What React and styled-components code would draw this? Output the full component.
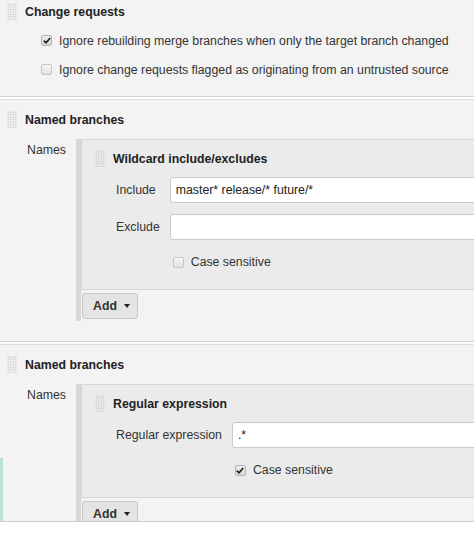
import React from "react";
import styled, { createGlobalStyle } from "styled-components";

const GlobalStyle = createGlobalStyle`
  html, body { margin: 0; padding: 0; background: #ffffff; }
  body {
    font-family: "Liberation Sans", Arial, Helvetica, sans-serif;
    font-size: 12.3px;
    color: #333;
  }
  * { box-sizing: border-box; }
`;

const Viewport = styled.div`
  position: relative;
  width: 474px;
  height: 522px;
  overflow: hidden;
  border-bottom: 1px solid #cbcbcb;
`;

const Scroller = styled.div`
  width: 540px;
  margin-top: -9px;
`;

const Section = styled.section`
  background: #f3f3f3;
  border-top: 1px solid #dedede;
  border-bottom: 1px solid #d3d3d3;
  padding: 11px 0 ${(p) => p.$pb ?? 20}px 7px;
  & + & { margin-top: 2px; }
`;

const Header = styled.div`
  display: flex;
  align-items: center;
  gap: 8px;
  height: 17px;
  font-weight: bold;
  font-size: 12.3px;
  color: #222;
`;

const Grip = styled.span`
  flex: none;
  width: 10px;
  height: 17px;
  background-image: radial-gradient(circle, #d0d0d0 0.75px, transparent 0.95px);
  background-size: 2.5px 2.5px;
  background-position: 0 0;
`;

const CheckList = styled.div`
  display: grid;
  grid-auto-rows: 29px;
  padding: 6px 0 0 34px;
`;

const CheckRow = styled.label`
  display: flex;
  align-items: center;
  gap: 7px;
  color: #333;
  white-space: nowrap;
`;

const Box = styled.span`
  flex: none;
  width: 11px;
  height: 11px;
  border: 1px solid ${(p) => (p.$checked ? "#b3b3b3" : "#c6c6c6")};
  border-radius: 2px;
  background: ${(p) =>
    p.$checked
      ? "linear-gradient(#eeeeee, #d9d9d9)"
      : "linear-gradient(#f6f6f6, #e2e2e2)"};
  display: flex;
  align-items: center;
  justify-content: center;
`;

const Checkbox = ({ checked }) => (
  <Box $checked={checked}>
    {checked && (
      <svg width="8" height="7" viewBox="0 0 8 7">
        <path d="M0.8 3.6 L3 5.8 L7.2 1" fill="none" stroke="#222" strokeWidth="1.7" />
      </svg>
    )}
  </Box>
);

const NamesRow = styled.div`
  display: grid;
  grid-template-columns: 69px 1fr;
  margin-top: 11px;
`;

const NamesLabel = styled.div`
  text-align: right;
  padding: 4px 10px 0 0;
  line-height: 15px;
  color: #333;
`;

const Chunk = styled.div`
  border-left: 5px solid #d7d7d7;
  padding-bottom: 2px;
`;

const Panel = styled.div`
  background: #ebebeb;
  border: 1px solid #d6d6d6;
  border-right: none;
  padding: 10px 0 16px 13px;
`;

const Fields = styled.div`
  display: grid;
  grid-template-columns: auto 1fr;
  column-gap: 10px;
  row-gap: 11px;
  margin: 10px 0 0 21px;
  align-items: center;
`;

const FieldLabel = styled.div`
  color: #333;
  white-space: nowrap;
`;

const Input = styled.div`
  height: 26px;
  background: #fff;
  border: 1px solid #cacaca;
  border-radius: 3px;
  padding: 0 5px;
  display: flex;
  align-items: center;
  color: #222;
`;

const OptionRow = styled.label`
  grid-column: 2;
  display: flex;
  align-items: center;
  gap: 7px;
  height: 22px;
  padding-left: 3px;
  color: #333;
`;

const AddButton = styled.button`
  display: inline-flex;
  align-items: center;
  gap: 7px;
  height: 26px;
  margin: 3px 0 0 1px;
  padding: 0 7px 0 10px;
  background: #e4e4e4;
  border: 1px solid #c8c8c8;
  border-radius: 3px;
  font-family: inherit;
  font-size: 12.3px;
  font-weight: bold;
  color: #333;
`;

const Caret = styled.span`
  width: 0;
  height: 0;
  border-top: 4.5px solid #222;
  border-left: 3.5px solid transparent;
  border-right: 3.5px solid transparent;
`;

const Stripe = styled.div`
  position: absolute;
  left: 0;
  top: 458px;
  bottom: 0;
  width: 3px;
  background: #b9e1d4;
`;

const Add = () => (
  <AddButton>
    Add <Caret />
  </AddButton>
);

export default function App() {
  return (
    <>
      <GlobalStyle />
      <Viewport>
        <Scroller>
          <Section $pb={12}>
            <Header>
              <Grip />
              Change requests
            </Header>
            <CheckList>
              <CheckRow>
                <Checkbox checked />
                Ignore rebuilding merge branches when only the target branch changed
              </CheckRow>
              <CheckRow>
                <Checkbox />
                Ignore change requests flagged as originating from an untrusted source
              </CheckRow>
            </CheckList>
          </Section>

          <Section>
            <Header>
              <Grip />
              Named branches
            </Header>
            <NamesRow>
              <NamesLabel>Names</NamesLabel>
              <Chunk>
                <Panel>
                  <Header>
                    <Grip />
                    Wildcard include/excludes
                  </Header>
                  <Fields>
                    <FieldLabel>Include</FieldLabel>
                    <Input>master* release/* future/*</Input>
                    <FieldLabel>Exclude</FieldLabel>
                    <Input />
                    <OptionRow>
                      <Checkbox />
                      Case sensitive
                    </OptionRow>
                  </Fields>
                </Panel>
                <Add />
              </Chunk>
            </NamesRow>
          </Section>

          <Section>
            <Header>
              <Grip />
              Named branches
            </Header>
            <NamesRow>
              <NamesLabel>Names</NamesLabel>
              <Chunk>
                <Panel>
                  <Header>
                    <Grip />
                    Regular expression
                  </Header>
                  <Fields>
                    <FieldLabel>Regular expression</FieldLabel>
                    <Input>.*</Input>
                    <OptionRow>
                      <Checkbox checked />
                      Case sensitive
                    </OptionRow>
                  </Fields>
                </Panel>
                <Add />
              </Chunk>
            </NamesRow>
          </Section>
        </Scroller>
        <Stripe />
      </Viewport>
    </>
  );
}
